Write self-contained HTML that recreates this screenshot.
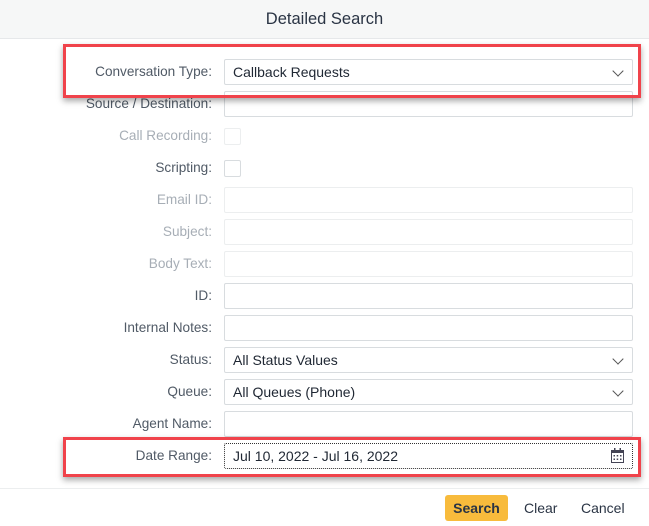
<!DOCTYPE html><html><head><style>
body{margin:0;width:649px;height:526px;background:#fff;font-family:"Liberation Sans",sans-serif;position:relative;overflow:hidden}
.hdr{position:absolute;left:0;top:0;width:649px;height:38px;background:#f6f7f7;border-bottom:1px solid #e6e8ea;text-align:center;line-height:38px;font-size:16.5px;color:#2a3444}
.lbl{position:absolute;right:437px;font-size:13.6px;color:#505a66;text-align:right;white-space:nowrap}
.dis{color:#a7aeb6}
.in{position:absolute;left:224px;width:399px;height:24px;border:1px solid #d8dcdf;background:#fff;border-radius:2px;font-size:14px;color:#1f2733;line-height:24px;padding-left:8px;box-sizing:content-box}
.cb{position:absolute;left:224px;width:15px;height:15px;border:1px solid #d8dcdf;border-radius:2px}
.chev{position:absolute;right:10px;top:7px;width:7px;height:7px;border-right:1.3px solid #555;border-bottom:1.3px solid #555;transform:rotate(45deg)}
.red{position:absolute;left:63px;width:572px;border:3px solid #f0434b;box-shadow:0 3px 6px rgba(0,0,0,.35)}
.ft{position:absolute;left:0;top:488px;width:649px;border-top:1px solid #eceeef}
.btn{position:absolute;top:495px;height:26px;line-height:26px;font-size:14px;color:#2a3444}
</style></head><body>
<div class="hdr">Detailed Search</div>
<div class="lbl" style="top:64px">Conversation Type:</div>
<div class="in" style="top:59px">Callback Requests<div class="chev"></div></div>
<div class="lbl" style="top:96px">Source / Destination:</div>
<div class="in" style="top:91px"></div>
<div class="lbl dis" style="top:128px">Call Recording:</div>
<div class="cb" style="top:128px;border-color:#eceeef"></div>
<div class="lbl" style="top:160px">Scripting:</div>
<div class="cb" style="top:160px"></div>
<div class="lbl dis" style="top:192px">Email ID:</div>
<div class="in" style="top:187px;border-color:#eceeef"></div>
<div class="lbl dis" style="top:224px">Subject:</div>
<div class="in" style="top:219px;border-color:#eceeef"></div>
<div class="lbl dis" style="top:256px">Body Text:</div>
<div class="in" style="top:251px;border-color:#eceeef"></div>
<div class="lbl" style="top:288px">ID:</div>
<div class="in" style="top:283px"></div>
<div class="lbl" style="top:320px">Internal Notes:</div>
<div class="in" style="top:315px"></div>
<div class="lbl" style="top:352px">Status:</div>
<div class="in" style="top:347px">All Status Values<div class="chev"></div></div>
<div class="lbl" style="top:384px">Queue:</div>
<div class="in" style="top:379px">All Queues (Phone)<div class="chev"></div></div>
<div class="lbl" style="top:416px">Agent Name:</div>
<div class="in" style="top:411px"></div>
<div class="lbl" style="top:448px">Date Range:</div>
<div class="in" style="top:443px;border:1px dotted #333">Jul 10, 2022 - Jul 16, 2022
<svg style="position:absolute;right:8px;top:4px" width="13" height="15" viewBox="0 0 13 15"><rect x="0.5" y="2.5" width="12" height="12" fill="none" stroke="#445" /><rect x="0.5" y="2.5" width="12" height="2.5" fill="#445"/><rect x="3" y="0" width="1.5" height="3" fill="#445"/><rect x="8.5" y="0" width="1.5" height="3" fill="#445"/><g fill="#445"><rect x="2.5" y="7" width="1.5" height="1.5"/><rect x="5.7" y="7" width="1.5" height="1.5"/><rect x="9" y="7" width="1.5" height="1.5"/><rect x="2.5" y="10.5" width="1.5" height="1.5"/><rect x="5.7" y="10.5" width="1.5" height="1.5"/><rect x="9" y="10.5" width="1.5" height="1.5"/></g></svg></div>
<div class="red" style="top:44px;height:48px"></div>
<div class="red" style="top:437px;height:34px"></div>
<div class="ft"></div>
<div class="btn" style="left:445px;width:63px;background:#f8bb3c;border-radius:3px;text-align:center;font-weight:bold">Search</div>
<div class="btn" style="left:524px">Clear</div>
<div class="btn" style="left:581px">Cancel</div>
</body></html>
